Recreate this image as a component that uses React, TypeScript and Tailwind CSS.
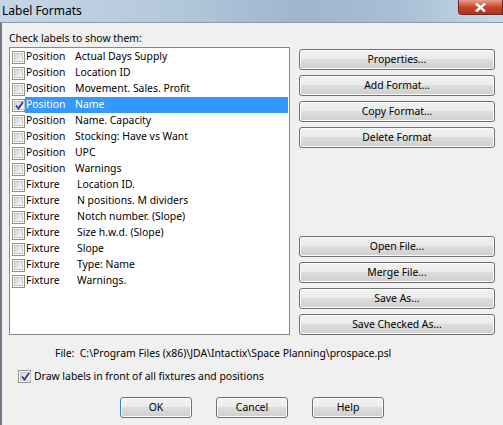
import React from "react";

const rows: { kind: string; name: string; checked?: boolean }[] = [
  { kind: "Position", name: "Actual Days Supply" },
  { kind: "Position", name: "Location ID" },
  { kind: "Position", name: "Movement. Sales. Profit" },
  { kind: "Position", name: "Name", checked: true },
  { kind: "Position", name: "Name. Capacity" },
  { kind: "Position", name: "Stocking: Have vs Want" },
  { kind: "Position", name: "UPC" },
  { kind: "Position", name: "Warnings" },
  { kind: "Fixture", name: "Location ID." },
  { kind: "Fixture", name: "N positions. M dividers" },
  { kind: "Fixture", name: "Notch number. (Slope)" },
  { kind: "Fixture", name: "Size h.w.d. (Slope)" },
  { kind: "Fixture", name: "Slope" },
  { kind: "Fixture", name: "Type: Name" },
  { kind: "Fixture", name: "Warnings." },
];

function Check({ checked }: { checked?: boolean }) {
  return (
    <span className="w-[13px] h-[13px] shrink-0 border border-[#8e8f8f] bg-white p-[1px] flex">
      <span className="flex-1 bg-gradient-to-br from-[#d8d8d8] to-[#f6f6f6] border border-[#c4c4c4] flex items-center justify-center">
        {checked && (
          <svg width="9" height="9" viewBox="0 0 9 9">
            <path d="M1 4.5 L3.5 7.5 L8 1" fill="none" stroke="#2a3f8c" strokeWidth="1.8" />
          </svg>
        )}
      </span>
    </span>
  );
}

function Btn({ label, className = "" }: { label: string; className?: string }) {
  return (
    <div
      className={
        "h-[21px] rounded-[3px] border border-[#707070] flex items-center justify-center text-[10.4px] text-black " +
        "bg-[linear-gradient(#f2f2f2_0%,#ebebeb_45%,#dddddd_50%,#cfcfcf_100%)] shadow-[inset_0_0_0_1px_#fcfcfc] " +
        className
      }
    >
      {label}
    </div>
  );
}

export default function App() {
  return (
    <div
      className="w-[503px] h-[425px] overflow-hidden flex flex-col relative text-black"
      style={{ fontFamily: '"Noto Sans", "Open Sans", sans-serif' }}
    >
      {/* title bar */}
      <div className="h-[22px] shrink-0 flex items-center pl-[2px] bg-[linear-gradient(90deg,#c5d6e7_0%,#b3c7dc_35%,#9fb5cc_60%,#a9bfd5_80%,#c7d8e9_100%)] text-[12px]">
        Label Formats
      </div>
      <div className="absolute top-0 right-0 w-[45px] h-[15px] rounded-bl-[4px] border border-t-0 border-[#6e2a20] bg-[linear-gradient(#e6a08e,#c8452c_50%,#b2321b)] flex items-center justify-center">
        <svg width="11" height="9" viewBox="0 0 11 9">
          <path d="M1 0.5 L10 8.5 M10 0.5 L1 8.5" stroke="white" strokeWidth="2.4" />
        </svg>
      </div>

      {/* dialog body */}
      <div className="flex-1 flex flex-col bg-[#f0f0f0] border-l-[2px] border-t border-[#6f7b89] border-t-[#8d9aa8]">
        <div className="pl-[7px] pt-[8px] text-[10.4px] leading-[14px]">Check labels to show them:</div>
        <div className="flex pl-[7px] mt-[2px]">
          <div className="w-[281px] h-[288px] bg-white border border-[#828790] pt-[1px]">
            {rows.map((r, i) => (
              <div key={i} className="h-[16px] flex items-center text-[10.4px]">
                <span className="ml-[2px]">
                  <Check checked={r.checked} />
                </span>
                <div
                  className={
                    "flex-1 h-full flex items-center pl-[1px] mr-[1px] " +
                    (r.checked ? "bg-[#3399ff] text-white" : "")
                  }
                >
                  <span className={r.kind === "Position" ? "w-[49px]" : "w-[51px]"}>{r.kind}</span>
                  <span>{r.name}</span>
                </div>
              </div>
            ))}
          </div>
          <div className="w-[196px] ml-[9px] pt-[2px] flex flex-col">
            <div className="flex flex-col gap-[5px]">
              <Btn label="Properties..." />
              <Btn label="Add Format..." />
              <Btn label="Copy Format..." />
              <Btn label="Delete Format" />
            </div>
            <div className="flex flex-col gap-[5px] mt-[88px]">
              <Btn label="Open File..." />
              <Btn label="Merge File..." />
              <Btn label="Save As..." />
              <Btn label="Save Checked As..." />
            </div>
          </div>
        </div>
        <div className="pl-[53px] mt-[11px] text-[10.4px] leading-[14px]">
          File:&nbsp; C:\Program Files (x86)\JDA\Intactix\Space Planning\prospace.psl
        </div>
        <div className="pl-[16px] mt-[9px] flex items-center gap-[3px] text-[10.4px] leading-[14px]">
          <Check checked />
          <span>Draw labels in front of all fixtures and positions</span>
        </div>
        <div className="flex pl-[118px] gap-[24px] mt-[14px]">
          <Btn label="OK" className="w-[72px] !border-[#3c7fb1] shadow-[inset_0_0_0_1px_#c6e4f6]" />
          <Btn label="Cancel" className="w-[72px]" />
          <Btn label="Help" className="w-[72px]" />
        </div>
      </div>
    </div>
  );
}
